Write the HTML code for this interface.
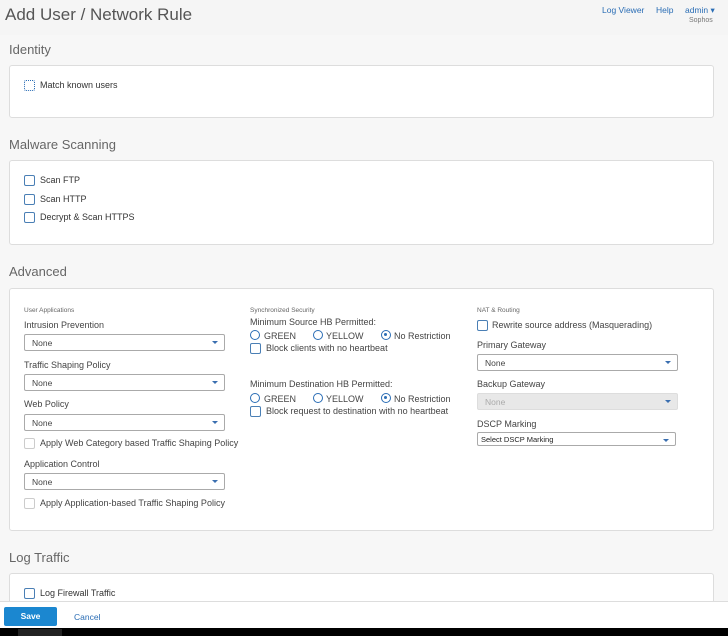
<!DOCTYPE html>
<html><head><meta charset="utf-8"><style>
*{box-sizing:border-box;margin:0;padding:0}
body{width:728px;height:636px;overflow:hidden;background:#f7f7f7;font-family:"Liberation Sans",sans-serif;color:#333;position:relative}
.a{position:absolute;white-space:nowrap}
.h{font-size:13px;color:#666}
.p{position:absolute;left:9px;width:705px;background:#fff;border:1px solid #ddd;border-radius:3px}
.cb{position:absolute;width:11px;height:11px;border:1px solid #4a7fb5;border-radius:2px;background:#fff}
.cbg{border-color:#ccc}
.t{font-size:9px;color:#333}
.l{font-size:9px;color:#444}
.s{font-size:6.5px;color:#666}
.sel{position:absolute;height:17px;border:1px solid #aaa;border-radius:2px;background:#fff;font-size:8.5px;color:#444;padding:3px 0 0 7px}
.sel:after{content:"";position:absolute;right:6px;top:6px;border-left:3px solid transparent;border-right:3px solid transparent;border-top:3px solid #3a6fb0}
.r{position:absolute;width:10px;height:10px;border:1.5px solid #2a6db5;border-radius:50%;background:#fff}
.r.on:after{content:"";position:absolute;left:2px;top:2px;width:3px;height:3px;border-radius:50%;background:#2a6db5}
</style></head><body>
<div class="a" style="left:0;top:0;width:728px;height:35px;background:#f5f5f5"></div>
<div class="a" style="left:5px;top:5px;font-size:17px;color:#555">Add User / Network Rule</div>
<div class="a" style="left:602px;top:5px;font-size:8.5px;color:#2a6db5">Log Viewer</div>
<div class="a" style="left:656px;top:5px;font-size:8.5px;color:#2a6db5">Help</div>
<div class="a" style="left:685px;top:5px;font-size:8.5px;color:#2a6db5">admin ▾</div>
<div class="a" style="left:689px;top:17px;font-size:7px;color:#777">Sophos</div>

<div class="a h" style="left:9px;top:42px">Identity</div>
<div class="p" style="top:65px;height:53px"></div>
<div class="cb" style="left:24px;top:80px;border:1px dotted #2a6db5"></div>
<div class="a t" style="left:40px;top:80px">Match known users</div>

<div class="a h" style="left:9px;top:137px">Malware Scanning</div>
<div class="p" style="top:160px;height:85px"></div>
<div class="cb" style="left:24px;top:175px"></div><div class="a t" style="left:40px;top:175px">Scan FTP</div>
<div class="cb" style="left:24px;top:194px"></div><div class="a t" style="left:40px;top:194px">Scan HTTP</div>
<div class="cb" style="left:24px;top:212px"></div><div class="a t" style="left:40px;top:212px">Decrypt &amp; Scan HTTPS</div>

<div class="a h" style="left:9px;top:264px">Advanced</div>
<div class="p" style="top:288px;height:243px"></div>
<div class="a s" style="left:24px;top:307px">User Applications</div>
<div class="a l" style="left:24px;top:320px">Intrusion Prevention</div>
<div class="sel" style="left:24px;top:334px;width:201px">None</div>
<div class="a l" style="left:24px;top:360px">Traffic Shaping Policy</div>
<div class="sel" style="left:24px;top:374px;width:201px">None</div>
<div class="a l" style="left:24px;top:399px">Web Policy</div>
<div class="sel" style="left:24px;top:414px;width:201px">None</div>
<div class="cb cbg" style="left:24px;top:438px"></div><div class="a l" style="left:40px;top:438px">Apply Web Category based Traffic Shaping Policy</div>
<div class="a l" style="left:24px;top:459px">Application Control</div>
<div class="sel" style="left:24px;top:473px;width:201px">None</div>
<div class="cb cbg" style="left:24px;top:498px"></div><div class="a l" style="left:40px;top:498px">Apply Application-based Traffic Shaping Policy</div>

<div class="a s" style="left:250px;top:307px">Synchronized Security</div>
<div class="a l" style="left:250px;top:317px">Minimum Source HB Permitted:</div>
<div class="r" style="left:250px;top:330px"></div><div class="a l" style="left:264px;top:331px">GREEN</div>
<div class="r" style="left:313px;top:330px"></div><div class="a l" style="left:326px;top:331px">YELLOW</div>
<div class="r on" style="left:381px;top:330px"></div><div class="a l" style="left:394px;top:331px">No Restriction</div>
<div class="cb" style="left:250px;top:343px"></div><div class="a l" style="left:266px;top:343px">Block clients with no heartbeat</div>
<div class="a l" style="left:250px;top:379px">Minimum Destination HB Permitted:</div>
<div class="r" style="left:250px;top:393px"></div><div class="a l" style="left:264px;top:394px">GREEN</div>
<div class="r" style="left:313px;top:393px"></div><div class="a l" style="left:326px;top:394px">YELLOW</div>
<div class="r on" style="left:381px;top:393px"></div><div class="a l" style="left:394px;top:394px">No Restriction</div>
<div class="cb" style="left:250px;top:406px"></div><div class="a l" style="left:266px;top:406px">Block request to destination with no heartbeat</div>

<div class="a s" style="left:477px;top:307px">NAT &amp; Routing</div>
<div class="cb" style="left:477px;top:320px"></div><div class="a l" style="left:492px;top:320px">Rewrite source address (Masquerading)</div>
<div class="a l" style="left:477px;top:340px">Primary Gateway</div>
<div class="sel" style="left:477px;top:354px;width:201px">None</div>
<div class="a l" style="left:477px;top:379px">Backup Gateway</div>
<div class="sel" style="left:477px;top:393px;width:201px;background:#e8e8e8;border-color:#ddd;color:#aaa">None</div>
<div class="a l" style="left:477px;top:419px">DSCP Marking</div>
<div class="sel" style="left:477px;top:432px;width:199px;height:14px;font-size:7.5px;padding:2px 0 0 3px;color:#222">Select DSCP Marking</div>

<div class="a h" style="left:9px;top:550px">Log Traffic</div>
<div class="p" style="top:573px;height:40px"></div>
<div class="cb" style="left:24px;top:588px"></div><div class="a t" style="left:40px;top:588px">Log Firewall Traffic</div>

<div class="a" style="left:0;top:601px;width:728px;height:27px;background:#fff;border-top:1px solid #ddd"></div>
<div class="a" style="left:4px;top:607px;width:53px;height:19px;background:#1b87d0;border-radius:2px;color:#fff;font-size:8.5px;font-weight:bold;text-align:center;line-height:19px">Save</div>
<div class="a" style="left:74px;top:612px;font-size:8.5px;color:#2a6db5">Cancel</div>
<div class="a" style="left:0;top:628px;width:728px;height:8px;background:#000"></div>
<div class="a" style="left:18px;top:629px;width:44px;height:7px;background:#222"></div>
</body></html>
